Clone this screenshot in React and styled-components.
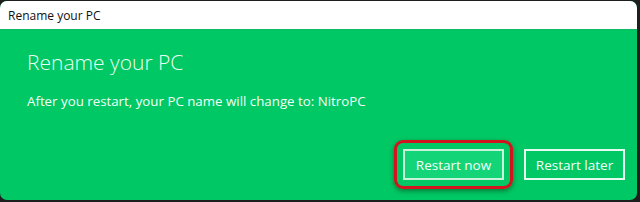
import React from "react";
import styled, { createGlobalStyle } from "styled-components";

const GlobalStyle = createGlobalStyle`
  html, body {
    margin: 0;
    padding: 0;
    background: #1e1e1e;
  }
  body {
    width: 640px;
    height: 202px;
    overflow: hidden;
    font-family: "Open Sans", "Noto Sans", "Liberation Sans", sans-serif;
  }
`;

const Window = styled.div`
  margin-top: 1px;
  width: 637px;
  height: 199px;
  border-radius: 7px;
  overflow: hidden;
  display: flex;
  flex-direction: column;
  background: #00c864;
`;

const TitleBar = styled.div`
  height: 28px;
  flex-shrink: 0;
  background: #ffffff;
  display: flex;
  align-items: center;
  padding-left: 8px;
  font-size: 12px;
  color: #111111;
  border-bottom: 1px solid #0fb863;
`;

const Body = styled.div`
  flex: 1;
  display: flex;
  flex-direction: column;
  padding: 18px 12px 0 27px;
  color: #ffffff;
`;

const Heading = styled.h1`
  margin: 0;
  font-size: 21px;
  font-weight: 300;
  line-height: 28px;
  color: #eafff2;
`;

const Message = styled.p`
  margin: 15px 0 0;
  font-size: 13.3px;
  line-height: 20px;
  color: #f2fff7;
`;

const Actions = styled.div`
  margin-top: auto;
  margin-bottom: 20px;
  display: flex;
  justify-content: flex-end;
  gap: 20px;
`;

const Highlight = styled.div`
  padding: 6px 6px;
  margin: -9px -9px;
  border: 3px solid #d1141e;
  border-radius: 9px;
  box-shadow: 0 2px 5px rgba(0, 60, 20, 0.55);
  display: flex;
`;

const Button = styled.button`
  width: 101px;
  height: 31px;
  font-family: inherit;
  font-size: 13.5px;
  color: #f4fff8;
  background: ${(p) => (p.$primary ? "#14d478" : "#00c864")};
  border: 2px solid ${(p) => (p.$primary ? "#c8f3da" : "#e6fbef")};
  padding: 0;
  cursor: pointer;
`;

export default function App() {
  return (
    <>
      <GlobalStyle />
      <Window>
        <TitleBar>Rename your PC</TitleBar>
        <Body>
          <Heading>Rename your PC</Heading>
          <Message>After you restart, your PC name will change to: NitroPC</Message>
          <Actions>
            <Highlight>
              <Button $primary>Restart now</Button>
            </Highlight>
            <Button>Restart later</Button>
          </Actions>
        </Body>
      </Window>
    </>
  );
}
